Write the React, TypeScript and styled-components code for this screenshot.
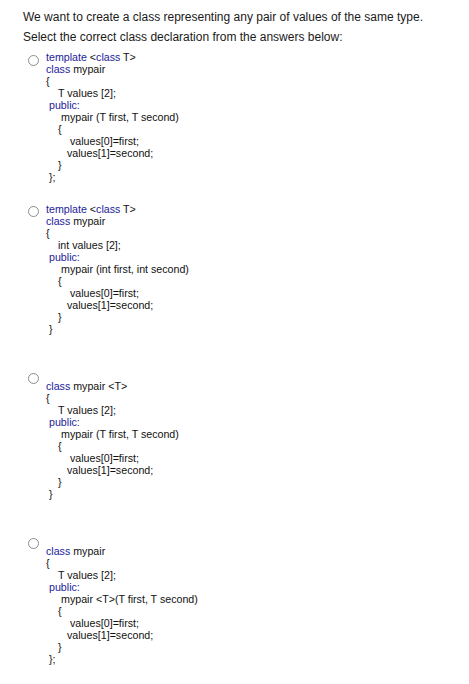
import React from "react";
import styled, { createGlobalStyle } from "styled-components";

const Global = createGlobalStyle`
  html, body { margin: 0; padding: 0; background: #ffffff; }
  body { font-family: "Liberation Sans", Arial, sans-serif; }
`;

const Page = styled.div`
  padding: 8px 0 20px 23px;
  color: #1a1a1a;
`;

const Question = styled.p`
  margin: 0;
  font-size: 12px;
  line-height: 19.5px;
`;

const Options = styled.div`
  display: flex;
  flex-direction: column;
`;

const Option = styled.label<{ $gap: number }>`
  display: flex;
  align-items: flex-start;
  margin-top: ${(p) => p.$gap}px;
  padding-left: 4.5px;
`;

const Radio = styled.span<{ $top: number }>`
  flex: none;
  box-sizing: border-box;
  width: 11px;
  height: 11px;
  margin-top: ${(p) => p.$top}px;
  margin-right: 7.5px;
  border: 1px solid #8c8c8c;
  border-radius: 50%;
  background: #ffffff;
`;

const Code = styled.div<{ $top: number }>`
  margin-top: ${(p) => p.$top}px;
  font-size: 10.67px;
  line-height: 12px;
  color: #111111;
`;

const Line = styled.div<{ $indent?: number }>`
  padding-left: ${(p) => p.$indent ?? 0}px;
  white-space: pre;
  height: 12px;
`;

const Kw = styled.span`
  color: #23239a;
`;

type L = { i: number; c: React.ReactNode };

const body = (ctor: React.ReactNode, member: React.ReactNode, close: string): L[] => [
  { i: 0, c: "{" },
  { i: 12, c: member },
  { i: 3, c: <Kw>public:</Kw> },
  { i: 15, c: ctor },
  { i: 12, c: "{" },
  { i: 24, c: "values[0]=first;" },
  { i: 21, c: "values[1]=second;" },
  { i: 12, c: "}" },
  { i: 3, c: close },
];

const templateHead: L[] = [
  {
    i: 0,
    c: (
      <>
        <Kw>template</Kw> &lt;<Kw>class</Kw> T&gt;
      </>
    ),
  },
  {
    i: 0,
    c: (
      <>
        <Kw>class</Kw> mypair
      </>
    ),
  },
];

const options: { gap: number; radio: number; code: number; lines: L[] }[] = [
  {
    gap: 4,
    radio: 3.5,
    code: 0,
    lines: [...templateHead, ...body("mypair (T first, T second)", "T values [2];", "};")],
  },
  {
    gap: 20,
    radio: 3,
    code: 0,
    lines: [...templateHead, ...body("mypair (int first, int second)", "int values [2];", "}")],
  },
  {
    gap: 38,
    radio: 0,
    code: 6.5,
    lines: [
      {
        i: 0,
        c: (
          <>
            <Kw>class</Kw> mypair &lt;T&gt;
          </>
        ),
      },
      ...body("mypair (T first, T second)", "T values [2];", "}"),
    ],
  },
  {
    gap: 38.5,
    radio: 0,
    code: 6.5,
    lines: [
      {
        i: 0,
        c: (
          <>
            <Kw>class</Kw> mypair
          </>
        ),
      },
      ...body("mypair <T>(T first, T second)", "T values [2];", "};"),
    ],
  },
];

export default function App() {
  return (
    <>
      <Global />
      <Page>
        <Question>We want to create a class representing any pair of values of the same type.</Question>
        <Question>Select the correct class declaration from the answers below:</Question>
        <Options>
          {options.map((o, idx) => (
            <Option key={idx} $gap={o.gap}>
              <Radio $top={o.radio} />
              <Code $top={o.code}>
                {o.lines.map((l, j) => (
                  <Line key={j} $indent={l.i}>
                    {l.c}
                  </Line>
                ))}
              </Code>
            </Option>
          ))}
        </Options>
      </Page>
    </>
  );
}
